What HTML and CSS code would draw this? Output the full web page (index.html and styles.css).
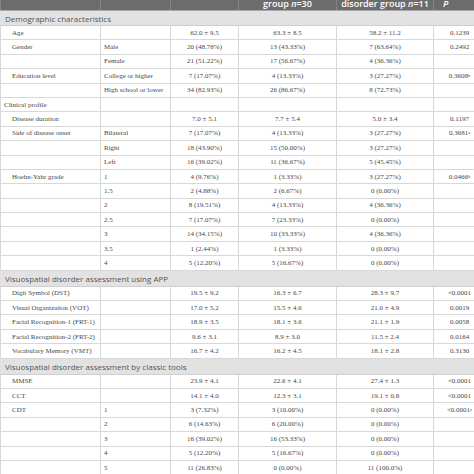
FILE: index.html
```html
<!DOCTYPE html>
<html>
<head>
<meta charset="utf-8">
<link rel="stylesheet" href="styles.css">
</head>
<body>
<div class="sheet">
  <div class="row head">
    <div class="c"></div><div class="c"></div><div class="c"></div>
    <div class="c"><span>group <i>n</i>=30</span></div>
    <div class="c"><span>disorder group <i>n</i>=11</span></div>
    <div class="c l pv"><span><i>P</i></span></div>
  </div>

  <div class="sect first">Demographic characteristics</div>
  <div class="row"><div class="c l sub">Age</div><div class="c l"></div><div class="c">62.0 ± 9.5</div><div class="c">63.3 ± 8.5</div><div class="c">58.2 ± 11.2</div><div class="c">0.1239</div></div>
  <div class="row"><div class="c l sub">Gender</div><div class="c l">Male</div><div class="c">20 (48.78%)</div><div class="c">13 (43.33%)</div><div class="c">7 (63.64%)</div><div class="c">0.2492</div></div>
  <div class="row"><div class="c l sub"></div><div class="c l">Female</div><div class="c">21 (51.22%)</div><div class="c">17 (56.67%)</div><div class="c">4 (36.36%)</div><div class="c"></div></div>
  <div class="row"><div class="c l sub">Education level</div><div class="c l">College or higher</div><div class="c">7 (17.07%)</div><div class="c">4 (13.33%)</div><div class="c">3 (27.27%)</div><div class="c">0.3608<sup>b</sup></div></div>
  <div class="row"><div class="c l sub"></div><div class="c l">High school or lower</div><div class="c">34 (82.93%)</div><div class="c">26 (86.67%)</div><div class="c">8 (72.73%)</div><div class="c"></div></div>
  <div class="row"><div class="c l">Clinical profile</div><div class="c l"></div><div class="c"></div><div class="c"></div><div class="c"></div><div class="c"></div></div>
  <div class="row"><div class="c l sub">Disease duration</div><div class="c l"></div><div class="c">7.0 ± 5.1</div><div class="c">7.7 ± 5.4</div><div class="c">5.0 ± 3.4</div><div class="c">0.1197</div></div>
  <div class="row"><div class="c l sub">Side of disease onset</div><div class="c l">Bilateral</div><div class="c">7 (17.07%)</div><div class="c">4 (13.33%)</div><div class="c">3 (27.27%)</div><div class="c">0.3681<sup>a</sup></div></div>
  <div class="row"><div class="c l sub"></div><div class="c l">Right</div><div class="c">18 (43.90%)</div><div class="c">15 (50.00%)</div><div class="c">3 (27.27%)</div><div class="c"></div></div>
  <div class="row"><div class="c l sub"></div><div class="c l">Left</div><div class="c">16 (39.02%)</div><div class="c">11 (36.67%)</div><div class="c">5 (45.45%)</div><div class="c"></div></div>
  <div class="row"><div class="c l sub">Hoehn-Yahr grade</div><div class="c l">1</div><div class="c">4 (9.76%)</div><div class="c">1 (3.33%)</div><div class="c">3 (27.27%)</div><div class="c">0.0466<sup>b</sup></div></div>
  <div class="row"><div class="c l sub"></div><div class="c l">1.5</div><div class="c">2 (4.88%)</div><div class="c">2 (6.67%)</div><div class="c">0 (0.00%)</div><div class="c"></div></div>
  <div class="row"><div class="c l sub"></div><div class="c l">2</div><div class="c">8 (19.51%)</div><div class="c">4 (13.33%)</div><div class="c">4 (36.36%)</div><div class="c"></div></div>
  <div class="row"><div class="c l sub"></div><div class="c l">2.5</div><div class="c">7 (17.07%)</div><div class="c">7 (23.33%)</div><div class="c">0 (0.00%)</div><div class="c"></div></div>
  <div class="row"><div class="c l sub"></div><div class="c l">3</div><div class="c">14 (34.15%)</div><div class="c">10 (33.33%)</div><div class="c">4 (36.36%)</div><div class="c"></div></div>
  <div class="row"><div class="c l sub"></div><div class="c l">3.5</div><div class="c">1 (2.44%)</div><div class="c">1 (3.33%)</div><div class="c">0 (0.00%)</div><div class="c"></div></div>
  <div class="row"><div class="c l sub"></div><div class="c l">4</div><div class="c">5 (12.20%)</div><div class="c">5 (16.67%)</div><div class="c">0 (0.00%)</div><div class="c"></div></div>

  <div class="sect">Visuospatial disorder assessment using APP</div>
  <div class="row"><div class="c l sub">Digit Symbol (DST)</div><div class="c l"></div><div class="c">19.5 ± 9.2</div><div class="c">16.3 ± 6.7</div><div class="c">28.3 ± 9.7</div><div class="c">&lt;0.0001</div></div>
  <div class="row"><div class="c l sub">Visual Organization (VOT)</div><div class="c l"></div><div class="c">17.0 ± 5.2</div><div class="c">15.5 ± 4.6</div><div class="c">21.0 ± 4.9</div><div class="c">0.0019</div></div>
  <div class="row"><div class="c l sub">Facial Recognition-1 (FRT-1)</div><div class="c l"></div><div class="c">18.9 ± 3.5</div><div class="c">18.1 ± 3.6</div><div class="c">21.1 ± 1.9</div><div class="c">0.0058</div></div>
  <div class="row"><div class="c l sub">Facial Recognition-2 (FRT-2)</div><div class="c l"></div><div class="c">9.6 ± 3.1</div><div class="c">8.9 ± 3.0</div><div class="c">11.5 ± 2.4</div><div class="c">0.0164</div></div>
  <div class="row"><div class="c l sub">Vocabulary Memory (VMT)</div><div class="c l"></div><div class="c">16.7 ± 4.2</div><div class="c">16.2 ± 4.5</div><div class="c">18.1 ± 2.8</div><div class="c">0.3130</div></div>

  <div class="sect">Visuospatial disorder assessment by classic tools</div>
  <div class="row"><div class="c l sub">MMSE</div><div class="c l"></div><div class="c">23.9 ± 4.1</div><div class="c">22.6 ± 4.1</div><div class="c">27.4 ± 1.3</div><div class="c">&lt;0.0001</div></div>
  <div class="row"><div class="c l sub">CCT</div><div class="c l"></div><div class="c">14.1 ± 4.0</div><div class="c">12.3 ± 3.1</div><div class="c">19.1 ± 0.8</div><div class="c">&lt;0.0001</div></div>
  <div class="row"><div class="c l sub">CDT</div><div class="c l">1</div><div class="c">3 (7.32%)</div><div class="c">3 (10.00%)</div><div class="c">0 (0.00%)</div><div class="c">&lt;0.0001<sup>a</sup></div></div>
  <div class="row"><div class="c l sub"></div><div class="c l">2</div><div class="c">6 (14.63%)</div><div class="c">6 (20.00%)</div><div class="c">0 (0.00%)</div><div class="c"></div></div>
  <div class="row"><div class="c l sub"></div><div class="c l">3</div><div class="c">16 (39.02%)</div><div class="c">16 (53.33%)</div><div class="c">0 (0.00%)</div><div class="c"></div></div>
  <div class="row"><div class="c l sub"></div><div class="c l">4</div><div class="c">5 (12.20%)</div><div class="c">5 (16.67%)</div><div class="c">0 (0.00%)</div><div class="c"></div></div>
  <div class="row"><div class="c l sub"></div><div class="c l">5</div><div class="c">11 (26.83%)</div><div class="c">0 (0.00%)</div><div class="c">11 (100.0%)</div><div class="c"></div></div>
</div>
</body>
</html>
```

FILE: styles.css
```css
html, body {
  margin: 0;
  padding: 0;
  background: #ffffff;
  overflow: hidden;
}

.sheet {
  width: 485px;
  font-family: "Liberation Serif", "Times New Roman", serif;
  font-size: 7px;
  color: #474747;
}

.row {
  display: grid;
  grid-template-columns: 100px 70px 68px 98px 97px 52px;
  height: 14.4px;
  box-sizing: border-box;
  border-bottom: 1px solid #d8d8d8;
}

.c {
  display: flex;
  align-items: center;
  justify-content: center;
  white-space: nowrap;
  border-left: 1px solid #d8d8d8;
  overflow: hidden;
}

.c.l {
  justify-content: flex-start;
  padding-left: 3px;
}

.c.sub {
  padding-left: 11px;
}

sup {
  font-size: 4.5px;
  vertical-align: 3px;
  line-height: 0;
}

.head {
  height: 11px;
  background: #6c6c6c;
  border-bottom: 1px solid #a9a9a9;
  color: #ffffff;
  font-family: "Open Sans", "DejaVu Sans", sans-serif;
  font-size: 9px;
  font-weight: 600;
  overflow: hidden;
}

.head .c {
  align-items: flex-start;
  border-left-color: #858585;
}

.head .c span {
  display: block;
  line-height: 9px;
  margin-top: -1.5px;
}

.head .pv {
  padding-left: 9px;
}

.sect {
  height: 16px;
  box-sizing: border-box;
  display: flex;
  align-items: center;
  padding-left: 5px;
  background: #e2e2e2;
  border-bottom: 1px solid #cfcfcf;
  font-family: "Open Sans", "DejaVu Sans", sans-serif;
  font-size: 8px;
  color: #555555;
}

.sect.first {
  height: 15px;
}
```
